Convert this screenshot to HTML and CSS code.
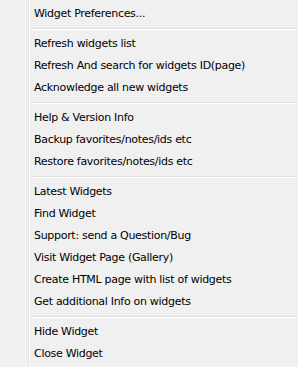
FILE: index.html
```html
<!DOCTYPE html>
<html>
<head>
<meta charset="utf-8">
<link rel="stylesheet" href="styles.css">
</head>
<body>
<div class="menu">
  <div class="item">Widget Preferences...</div>
  <div class="sep"></div>
  <div class="item">Refresh widgets list</div>
  <div class="item">Refresh And search for widgets ID(page)</div>
  <div class="item">Acknowledge all new widgets</div>
  <div class="sep"></div>
  <div class="item">Help &amp; Version Info</div>
  <div class="item">Backup favorites/notes/ids etc</div>
  <div class="item">Restore favorites/notes/ids etc</div>
  <div class="sep"></div>
  <div class="item">Latest Widgets</div>
  <div class="item">Find Widget</div>
  <div class="item">Support: send a Question/Bug</div>
  <div class="item">Visit Widget Page (Gallery)</div>
  <div class="item">Create HTML page with list of widgets</div>
  <div class="item">Get additional Info on widgets</div>
  <div class="sep"></div>
  <div class="item">Hide Widget</div>
  <div class="item">Close Widget</div>
</div>
</body>
</html>
```
FILE: styles.css
```css
html, body {
  margin: 0;
  padding: 0;
  background: #f0f0f0;
}
.menu {
  width: 298px;
  height: 367px;
  box-sizing: border-box;
  padding-top: 3px;
  background: linear-gradient(to right, #f1f1f1 0, #f1f1f1 28px, #e2e3e3 28px, #e2e3e3 29px, #ffffff 29px, #ffffff 30px, #f0f0f0 30px);
  font-family: "DejaVu Sans", sans-serif;
  font-size: 11px;
  letter-spacing: -0.3px;
  color: #000;
}
.item {
  height: 22px;
  line-height: 22px;
  padding-left: 34px;
  white-space: nowrap;
}
.sep {
  height: 8px;
  margin-left: 30px;
  box-sizing: border-box;
  padding-top: 3px;
}
.sep::before {
  content: "";
  display: block;
  height: 1px;
  background: #e0e0e0;
  border-bottom: 1px solid #ffffff;
}
```
